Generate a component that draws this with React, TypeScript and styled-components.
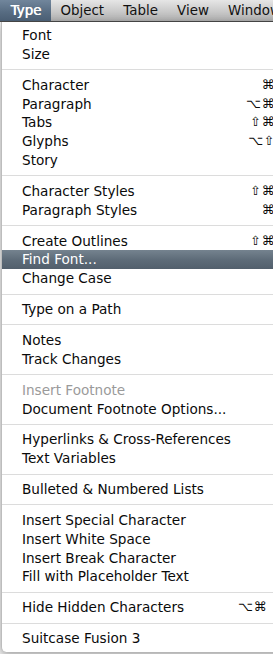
import React from "react";
import styled, { createGlobalStyle } from "styled-components";

const GlobalStyle = createGlobalStyle`
  html, body {
    margin: 0;
    padding: 0;
    background: #ffffff;
    overflow: hidden;
  }
  body {
    font-family: "DejaVu Sans", "Liberation Sans", sans-serif;
    -webkit-font-smoothing: antialiased;
  }
`;

const Screen = styled.div`
  width: 273px;
  height: 654px;
  position: relative;
  overflow: hidden;
  background: #f4f4f4;
`;

const MenuBar = styled.div`
  display: flex;
  align-items: stretch;
  height: 21px;
  background: linear-gradient(#e6e6e6, #c9c9c9 55%, #adadad);
  border-bottom: 1px solid #4a4a4a;
  white-space: nowrap;
`;

const MenuTitle = styled.div<{ $active?: boolean }>`
  display: flex;
  align-items: center;
  padding: 0 9.6px 0 ${(p) => (p.$active ? "10.5px" : "9.6px")};
  font-size: 13.4px;
  color: ${(p) => (p.$active ? "#ffffff" : "#111111")};
  text-shadow: ${(p) => (p.$active ? "0.4px 0 0 #ffffff" : "none")};
  background: ${(p) =>
    p.$active ? "linear-gradient(#71869c, #566b81 60%, #4a5e73)" : "transparent"};
`;

const Menu = styled.div`
  width: 320px;
  margin-left: 1px;
  padding: 4px 0 4px;
  background: #ffffff;
  border-left: 1px solid #bdbdbd;
  border-radius: 0 0 5px 5px;
  box-shadow: 0 3px 8px rgba(0, 0, 0, 0.35);
`;

const Item = styled.div<{ $active?: boolean; $disabled?: boolean }>`
  display: grid;
  grid-template-columns: 1fr auto 32px;
  align-items: center;
  height: 18.85px;
  padding: 0 15px 0 20px;
  font-size: 13.6px;
  line-height: 18.85px;
  white-space: nowrap;
  color: ${(p) => (p.$disabled ? "#9a9a9a" : p.$active ? "#ffffff" : "#0a0a0a")};
  background: ${(p) =>
    p.$active ? "linear-gradient(#75838f, #5e6c79 50%, #525f6c)" : "transparent"};
`;

const Mods = styled.span<{ $nudge?: number }>`
  font-size: 13px;
  letter-spacing: 0.5px;
  text-align: right;
  margin-right: ${(p) => p.$nudge ?? 0}px;
`;

const Key = styled.span`
  font-size: 12px;
  padding-left: 2px;
`;

const Separator = styled.div`
  height: 12px;
  display: flex;
  align-items: center;

  &::after {
    content: "";
    display: block;
    width: 100%;
    height: 1px;
    background: #dcdcdc;
  }
`;

type Entry = {
  label: string;
  mods?: string;
  key?: string;
  active?: boolean;
  disabled?: boolean;
  nudge?: number;
};

const groups: Entry[][] = [
  [{ label: "Font" }, { label: "Size" }],
  [
    { label: "Character", mods: "⌘", key: "T" },
    { label: "Paragraph", mods: "⌥⌘", key: "T" },
    { label: "Tabs", mods: "⇧⌘", key: "T" },
    { label: "Glyphs", mods: "⌥⇧", key: "F11" },
    { label: "Story" },
  ],
  [
    { label: "Character Styles", mods: "⇧⌘", key: "F11" },
    { label: "Paragraph Styles", mods: "⌘", key: "F11" },
  ],
  [
    { label: "Create Outlines", mods: "⇧⌘", key: "O" },
    { label: "Find Font...", active: true },
    { label: "Change Case" },
  ],
  [{ label: "Type on a Path" }],
  [{ label: "Notes" }, { label: "Track Changes" }],
  [
    { label: "Insert Footnote", disabled: true },
    { label: "Document Footnote Options..." },
  ],
  [{ label: "Hyperlinks & Cross-References" }, { label: "Text Variables" }],
  [{ label: "Bulleted & Numbered Lists" }],
  [
    { label: "Insert Special Character" },
    { label: "Insert White Space" },
    { label: "Insert Break Character" },
    { label: "Fill with Placeholder Text" },
  ],
  [{ label: "Hide Hidden Characters", mods: "⌥⌘", key: "I", nudge: 8 }],
  [{ label: "Suitcase Fusion 3" }],
];

const titles = ["Type", "Object", "Table", "View", "Window", "Help"];

export default function App() {
  return (
    <>
      <GlobalStyle />
      <Screen>
        <MenuBar>
          {titles.map((t, i) => (
            <MenuTitle key={t} $active={i === 0}>
              {t}
            </MenuTitle>
          ))}
        </MenuBar>
        <Menu>
          {groups.map((g, gi) => (
            <React.Fragment key={gi}>
              {gi > 0 && <Separator />}
              {g.map((e) => (
                <Item key={e.label} $active={e.active} $disabled={e.disabled}>
                  <span>{e.label}</span>
                  <Mods $nudge={e.nudge}>{e.mods ?? ""}</Mods>
                  <Key>{e.key ?? ""}</Key>
                </Item>
              ))}
            </React.Fragment>
          ))}
        </Menu>
      </Screen>
    </>
  );
}
